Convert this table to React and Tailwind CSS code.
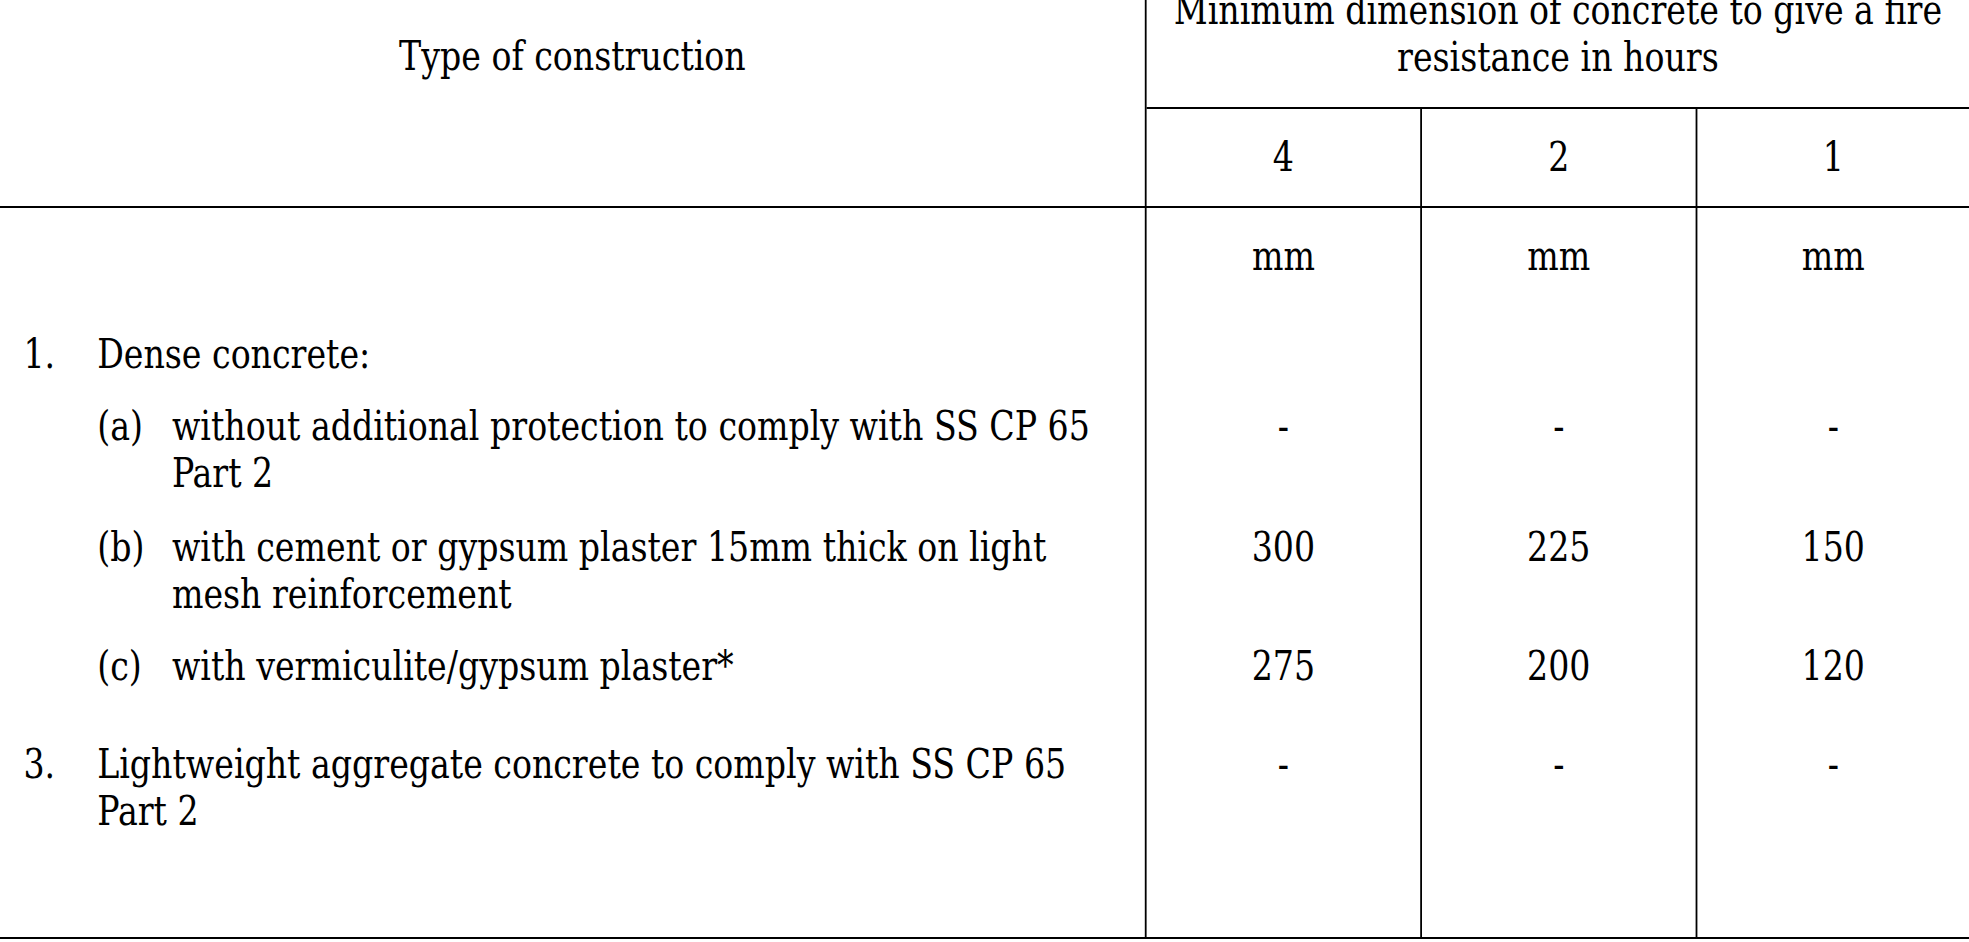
import React from "react";

// DejaVu Serif Condensed is not installed, so the table is laid out wide
// and squeezed horizontally to 90% to get the condensed look.
const font = "font-['DejaVu_Serif_Condensed','DejaVu_Serif',serif]";

const Row = ({ pt, left, values }) => (
  <div className="grid grid-cols-[1274px_306px_306px_1fr]">
    <div className="border-r-2 border-black pr-[40px]" style={{ paddingTop: pt }}>
      {left}
    </div>
    {values.map((v, i) => (
      <div
        key={i}
        className={`text-center ${i < 2 ? "border-r-2 border-black" : ""}`}
        style={{ paddingTop: pt }}
      >
        {v}
      </div>
    ))}
  </div>
);

const Item = ({ num, children }) => (
  <div className="flex pl-[26px]">
    <span className="w-[82px] shrink-0">{num}</span>
    <span>{children}</span>
  </div>
);

const SubItem = ({ label, children }) => (
  <div className="flex pl-[108px]">
    <span className="w-[83px] shrink-0">{label}</span>
    <span>{children}</span>
  </div>
);

const App = () => {
  return (
    <div className="h-[942px] w-[1969px] overflow-hidden bg-white text-black">
      <div
        className={`w-[2188px] origin-top-left scale-x-90 -mt-[13px] text-[41px] leading-[47px] ${font}`}
      >
        {/* header */}
        <div className="flex border-b-2 border-black">
          <div className="w-[1274px] shrink-0 border-r-2 border-black pt-[46px] text-center">
            Type of construction
          </div>
          <div className="flex-1">
            <div className="border-b-2 border-black pb-[26px] text-center whitespace-nowrap">
              Minimum dimension of concrete to give a fire
              <br />
              resistance in hours
            </div>
            <div className="grid grid-cols-[306px_306px_1fr] text-center">
              <div className="border-r-2 border-black py-[25px]">4</div>
              <div className="border-r-2 border-black py-[25px]">2</div>
              <div className="py-[25px]">1</div>
            </div>
          </div>
        </div>

        {/* body */}
        <Row pt={25} left={null} values={["mm", "mm", "mm"]} />
        <Row pt={51} left={<Item num="1.">Dense concrete:</Item>} values={["", "", ""]} />
        <Row
          pt={25}
          left={
            <SubItem label="(a)">
              without additional protection to comply with SS CP 65 Part 2
            </SubItem>
          }
          values={["-", "-", "-"]}
        />
        <Row
          pt={27}
          left={
            <SubItem label="(b)">
              with cement or gypsum plaster 15mm thick on light mesh reinforcement
            </SubItem>
          }
          values={["300", "225", "150"]}
        />
        <Row
          pt={25}
          left={<SubItem label="(c)">with vermiculite/gypsum plaster*</SubItem>}
          values={["275", "200", "120"]}
        />
        <div className="border-b-2 border-black">
          <Row
            pt={51}
            left={
              <div className="pb-[102px]">
                <Item num="3.">
                  Lightweight aggregate concrete to comply with SS CP 65 Part 2
                </Item>
              </div>
            }
            values={["-", "-", "-"]}
          />
        </div>
      </div>
    </div>
  );
};

export default App;
